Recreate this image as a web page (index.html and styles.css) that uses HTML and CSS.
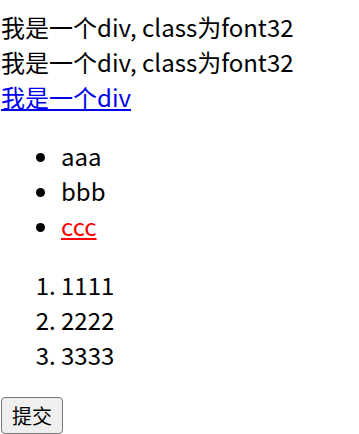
FILE: index.html
```html
<!DOCTYPE html>
<html>
<head>
<meta charset="utf-8">
<link rel="stylesheet" href="styles.css">
</head>
<body>
<div class="font32">我是一个div, class为font32</div>
<div class="font32">我是一个div, class为font32</div>
<a class="link" href="#">我是一个div</a>
<ul class="list">
<li>aaa</li>
<li>bbb</li>
<li><a class="red" href="#">ccc</a></li>
</ul>
<ol class="list">
<li>1111</li>
<li>2222</li>
<li>3333</li>
</ol>
<button class="btn">提交</button>
</body>
</html>
```
FILE: styles.css
```css
html, body {
  background: #fff;
}
body {
  margin: 9px 0 0 1px;
  font-family: "Noto Sans CJK SC", sans-serif;
  font-size: 24px;
  color: #000;
}
.link {
  color: #0000ee;
  text-decoration: underline;
}
.list {
  margin: 24px 0;
  padding-left: 60px;
}
.red {
  color: #ff0000;
  text-decoration: underline;
}
.btn {
  font-family: "Noto Sans CJK SC", sans-serif;
  font-size: 20px;
  padding: 3px 10px;
  border: 1px solid #767676;
  border-radius: 4px;
  background: #efefef;
  color: #000;
}
```
